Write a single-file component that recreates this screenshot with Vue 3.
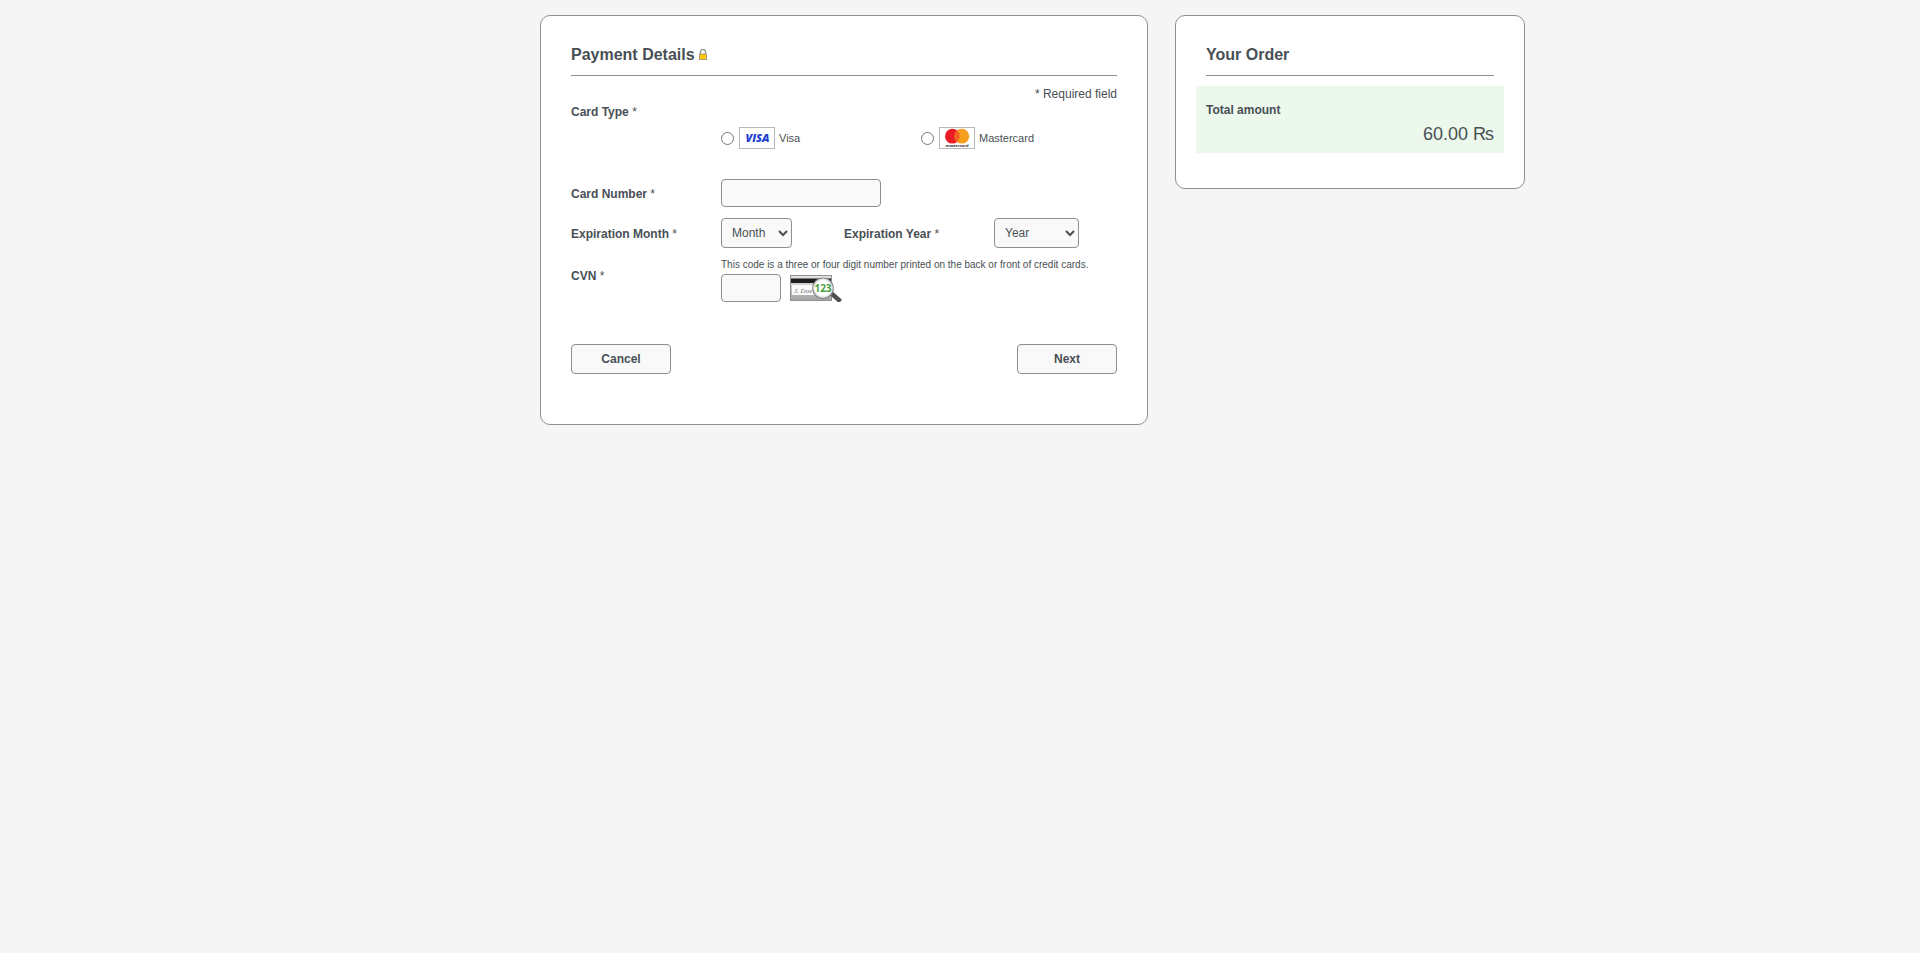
<script setup>
import { ref } from 'vue'

const cardType = ref('')
const cardNumber = ref('')
const month = ref('')
const year = ref('')
const cvn = ref('')

const months = Array.from({ length: 12 }, (_, i) => String(i + 1).padStart(2, '0'))
const years = Array.from({ length: 20 }, (_, i) => String(2024 + i))
</script>

<template>
  <div class="page">
    <main class="panel payment">
      <h1 class="title">
        Payment Details
        <svg class="lock" viewBox="0 0 8 11" width="8" height="11" aria-hidden="true">
          <path d="M1.5 5.5V3a2.5 2.5 0 0 1 5 0v2.5" fill="none" stroke="#8a8a8a" stroke-width="1.2" />
          <rect x="0.5" y="5" width="7" height="5.5" fill="#ffc800" stroke="#a39a80" stroke-width="1" />
        </svg>
      </h1>

      <form @submit.prevent>
        <p class="required">* Required field</p>

        <fieldset class="card-type">
          <legend class="label">Card Type <span>*</span></legend>
          <div class="options">
            <div class="option">
              <input id="visa" v-model="cardType" type="radio" name="card" value="visa" />
              <label for="visa">
                <svg width="36" height="22" viewBox="0 0 36 22" aria-hidden="true">
                  <rect x="0.5" y="0.5" width="35" height="21" fill="#fff" stroke="#b9b9b9" />
                  <text x="18.5" y="15" text-anchor="middle" class="visa-mark">VISA</text>
                </svg>
                Visa
              </label>
            </div>
            <div class="option">
              <input id="mastercard" v-model="cardType" type="radio" name="card" value="mastercard" />
              <label for="mastercard">
                <svg width="36" height="22" viewBox="0 0 36 22" aria-hidden="true">
                  <rect x="0.5" y="0.5" width="35" height="21" fill="#fff" stroke="#b9b9b9" />
                  <circle cx="13.4" cy="9.2" r="7.4" fill="#eb1c26" />
                  <circle cx="22.8" cy="9.2" r="7.4" fill="#f79e1f" />
                  <path d="M18.1 3.5a7.4 7.4 0 0 1 0 11.4a7.4 7.4 0 0 1 0-11.4z" fill="#f26122" />
                  <text x="18" y="20" text-anchor="middle" class="mastercard-mark">mastercard</text>
                </svg>
                Mastercard
              </label>
            </div>
          </div>
        </fieldset>

        <div class="row number-row">
          <label class="label" for="number">Card Number <span>*</span></label>
          <input id="number" v-model="cardNumber" class="field number" type="text" autocomplete="off" />
        </div>

        <div class="expiry">
          <div class="row">
            <label class="label" for="month">Expiration Month <span>*</span></label>
            <select id="month" v-model="month" class="field month">
              <option value="">Month</option>
              <option v-for="m in months" :key="m" :value="m">{{ m }}</option>
            </select>
          </div>
          <div class="row">
            <label class="label" for="year">Expiration Year <span>*</span></label>
            <select id="year" v-model="year" class="field year">
              <option value="">Year</option>
              <option v-for="y in years" :key="y" :value="y">{{ y }}</option>
            </select>
          </div>
        </div>

        <div class="row cvn-row">
          <label class="label" for="cvn">CVN <span>*</span></label>
          <div>
            <p id="cvn-hint" class="hint">
              This code is a three or four digit number printed on the back or front of credit cards.
            </p>
            <div class="cvn-line">
              <input id="cvn" v-model="cvn" class="field cvn" type="text" aria-describedby="cvn-hint" autocomplete="off" />
              <svg width="52" height="28" viewBox="0 0 52 28" aria-hidden="true">
                <defs>
                  <linearGradient id="cardShade" x1="0" y1="0" x2="0" y2="1">
                    <stop offset="0" stop-color="#e6e6e6" />
                    <stop offset="1" stop-color="#a3a3a3" />
                  </linearGradient>
                </defs>
                <rect x="0.5" y="1.5" width="41" height="25" fill="url(#cardShade)" stroke="#929292" />
                <rect x="1" y="4.5" width="40" height="4.5" fill="#1c1c1c" />
                <rect x="2" y="11" width="24" height="10" fill="#fafafa" />
                <text x="4" y="19" class="signature">J. Doe</text>
                <path d="M41 19L50.5 27.5" stroke="#505050" stroke-width="4.4" />
                <circle cx="33" cy="14.2" r="10.2" fill="#fff" stroke="#808080" stroke-width="1.2" />
                <circle cx="33" cy="14.2" r="9" fill="none" stroke="#dedede" stroke-width="1.2" />
                <text x="33" y="18" text-anchor="middle" class="digits">123</text>
              </svg>
            </div>
          </div>
        </div>

        <div class="actions">
          <button type="button">Cancel</button>
          <button type="submit">Next</button>
        </div>
      </form>
    </main>

    <aside class="panel order">
      <h2 class="title">Your Order</h2>
      <div class="total">
        <div class="total-label">Total amount</div>
        <div class="amount">60.00 ₨</div>
      </div>
    </aside>
  </div>
</template>

<style>
body {
  background: #f5f5f5;
}
</style>

<style scoped>
.page {
  display: grid;
  grid-template-columns: minmax(0, 608fr) minmax(0, 350fr);
  align-items: start;
  gap: 27px;
  max-width: 985px;
  margin-left: max(15px, calc(50% - 420px));
  padding: 15px 0;
  font-family: "Liberation Sans", Arial, sans-serif;
  font-size: 12px;
  line-height: 18px;
  color: #484f55;
}

@media (max-width: 900px) {
  .page {
    grid-template-columns: 1fr;
    margin-right: 15px;
  }
}

.panel {
  box-sizing: border-box;
  background: #fff;
  border: 1px solid #8f8f8f;
  border-radius: 10px;
  padding: 26px 30px 50px;
}

.order {
  padding-bottom: 35px;
}

.title {
  margin: 0;
  padding-bottom: 7px;
  border-bottom: 1px solid #8f8f8f;
  font-size: 16px;
  line-height: 26px;
}

p {
  margin: 0;
}

.required {
  margin-top: 9px;
  text-align: right;
}

.card-type {
  margin: 0;
  padding: 0;
  border: 0;
}

.label {
  width: 150px;
  padding: 0;
  flex: none;
  font-weight: 700;
}

.label span {
  font-weight: 400;
}

.row .label {
  padding-top: 2px;
}

.options {
  display: flex;
  margin: 6px 0 0 150px;
}

.option {
  display: flex;
  align-items: center;
  width: 200px;
  gap: 5px;
  font-size: 11px;
}

.option input {
  margin: 0;
  width: 13px;
  height: 13px;
}

.option label {
  display: flex;
  align-items: center;
  gap: 4px;
}

.visa-mark {
  fill: #2340d0;
  font: italic 800 11px "Open Sans", sans-serif;
}

.mastercard-mark {
  fill: #333;
  font: 700 4px "Open Sans", sans-serif;
}

.signature {
  fill: #6f6f6f;
  font: italic 7px "Liberation Serif", serif;
}

.digits {
  fill: #46a03a;
  font: 700 10px "Open Sans", sans-serif;
}

.row {
  display: flex;
  align-items: center;
}

.number-row {
  margin-top: 30px;
}

.expiry {
  display: grid;
  grid-template-columns: 1fr 1fr;
  margin-top: 11px;
}

.field {
  box-sizing: border-box;
  height: 28px;
  padding: 0 6px;
  border: 1px solid #8f8f8f;
  border-radius: 4px;
  background-color: #f9f9f9;
  color: #484f55;
  font-family: inherit;
  font-size: 12px;
}

.number {
  width: 160px;
}

.month,
.year {
  height: 30px;
}

.month {
  width: 71px;
}

.year {
  width: 85px;
}

.cvn-row {
  align-items: flex-start;
  margin-top: 10px;
}

.cvn-row .label {
  padding-top: 9px;
}

.hint {
  margin-bottom: 2px;
  font-size: 10px;
  line-height: 14px;
}

.cvn-line {
  display: flex;
  gap: 9px;
}

.cvn {
  width: 60px;
}

.actions {
  display: flex;
  justify-content: space-between;
  margin-top: 42px;
}

button {
  width: 100px;
  height: 30px;
  padding: 0;
  border: 1px solid #8f8f8f;
  border-radius: 4px;
  background: #f9f9f9;
  color: #484f55;
  font-family: inherit;
  font-size: 12px;
  font-weight: 700;
}

.total {
  margin: 10px -10px 0;
  padding: 14px 10px 7px;
  background: #ecf8ec;
}

.total-label {
  font-weight: 700;
  line-height: 20px;
}

.amount {
  margin-top: 2px;
  font-size: 18px;
  line-height: 24px;
  text-align: right;
}
</style>
